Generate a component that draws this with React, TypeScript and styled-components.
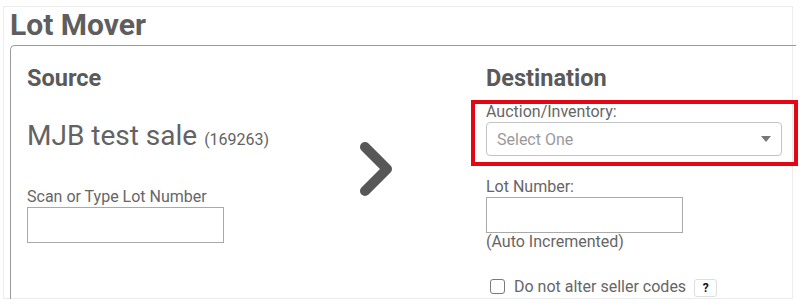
import React from 'react';
import styled, { createGlobalStyle } from 'styled-components';

const GlobalStyle = createGlobalStyle`
  body {
    margin: 0;
    background: #fff;
    font-family: Roboto, "Liberation Sans", sans-serif;
  }
`;

const Card = styled.div`
  margin: 6px 0 0 3px;
  width: 790px;
  height: 293px;
  border: 1px solid #ececec;
  padding: 0 0 0 6px;
  box-sizing: border-box;
`;

const Title = styled.h1`
  margin: 0;
  font-size: 30px;
  line-height: 36px;
  font-weight: 700;
  color: #5e5e5e;
`;

const Panel = styled.div`
  margin-top: 2px;
  margin-right: -4px;
  height: 256px;
  box-sizing: border-box;
  border-top: 1px solid #9a9a9a;
  border-left: 1px solid #9a9a9a;
  border-top-left-radius: 5px;
  padding: 20px 0 0 16px;
  display: grid;
  grid-template-columns: 318px 141px 1fr;
  align-items: start;
`;

const Column = styled.div`
  display: flex;
  flex-direction: column;
  align-items: flex-start;
`;

const Heading = styled.h2`
  margin: 0;
  font-size: 23.5px;
  line-height: 25px;
  font-weight: 700;
  color: #5a5a5a;
`;

const SaleName = styled.div`
  margin-top: 29px;
  font-size: 28px;
  line-height: 32px;
  color: #636363;
  small {
    font-size: 16px;
  }
`;

const Label = styled.label<{ $gap?: number }>`
  display: block;
  margin-top: ${p => p.$gap ?? 0}px;
  font-size: 16px;
  line-height: 17px;
  color: #666;
`;

const TextBox = styled.div`
  margin-top: 2px;
  width: 197px;
  height: 36px;
  box-sizing: border-box;
  border: 1px solid #a9a9a9;
  background: #fff;
`;

const ArrowCell = styled.div`
  padding: 72px 0 0 10px;
  color: #575757;
`;

const Highlight = styled.div`
  position: relative;
  margin-top: 12px;
  width: 296px;
  &::after {
    content: '';
    position: absolute;
    top: -3px;
    left: -15px;
    right: -16px;
    bottom: -10px;
    border: 4px solid #e30613;
    pointer-events: none;
  }
`;

const Select = styled.div`
  margin-top: 2px;
  height: 34px;
  box-sizing: border-box;
  border: 1px solid #c4c4c4;
  border-radius: 4px;
  display: flex;
  align-items: center;
  justify-content: space-between;
  padding: 0 10px 0 10px;
  font-size: 16px;
  color: #9a9a9a;
`;

const Caret = styled.span`
  width: 0;
  height: 0;
  border-left: 5px solid transparent;
  border-right: 5px solid transparent;
  border-top: 6px solid #777;
`;

const Note = styled.div`
  font-size: 16px;
  line-height: 18px;
  color: #666;
`;

const CheckRow = styled.div`
  margin-top: 25px;
  display: flex;
  align-items: center;
  padding-left: 4px;
  font-size: 16px;
  color: #666;
`;

const Check = styled.span`
  width: 15px;
  height: 15px;
  box-sizing: border-box;
  border: 1.5px solid #7a7a7a;
  border-radius: 3px;
  margin-right: 9px;
`;

const Help = styled.span`
  margin-left: 8px;
  margin-top: 3px;
  width: 23px;
  height: 18px;
  box-sizing: border-box;
  border: 1px solid #dedede;
  border-radius: 3px;
  display: flex;
  align-items: center;
  justify-content: center;
  font-size: 12px;
  font-weight: 700;
  color: #111;
`;

function Chevron() {
  return (
    <svg width="40" height="62" viewBox="0 0 40 62">
      <path d="M10 9 L32 31 L10 53" fill="none" stroke="currentColor" strokeWidth="10" strokeLinecap="round" strokeLinejoin="round" />
    </svg>
  );
}

export default function App() {
  return (
    <>
      <GlobalStyle />
      <Card>
        <Title>Lot Mover</Title>
        <Panel>
          <Column>
            <Heading>Source</Heading>
            <SaleName>
              MJB test sale <small>(169263)</small>
            </SaleName>
            <Label $gap={32}>Scan or Type Lot Number</Label>
            <TextBox />
          </Column>
          <ArrowCell>
            <Chevron />
          </ArrowCell>
          <Column>
            <Heading>Destination</Heading>
            <Highlight>
              <Label>Auction/Inventory:</Label>
              <Select>
                Select One
                <Caret />
              </Select>
            </Highlight>
            <Label $gap={22}>Lot Number:</Label>
            <TextBox />
            <Note>(Auto Incremented)</Note>
            <CheckRow>
              <Check />
              Do not alter seller codes
              <Help>?</Help>
            </CheckRow>
          </Column>
        </Panel>
      </Card>
    </>
  );
}
